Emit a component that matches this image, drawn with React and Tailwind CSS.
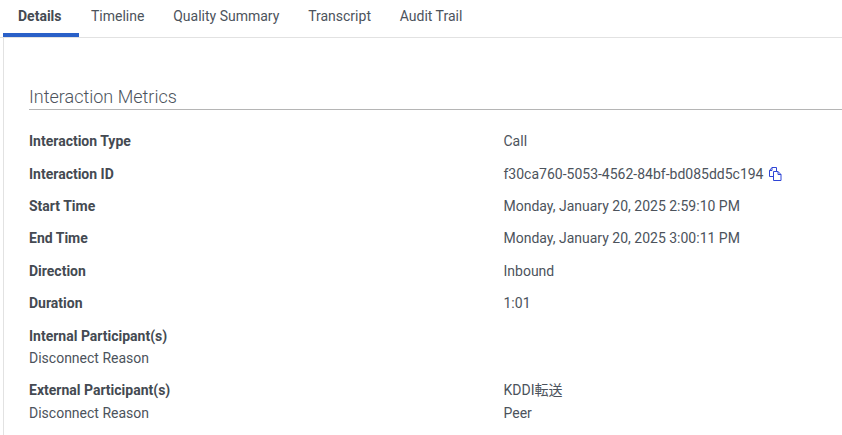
function CopyIcon() {
  return (
    <svg width="14" height="14" viewBox="0 0 14 14" fill="none" stroke="#2f45d6" strokeWidth="1" className="ml-[4px] shrink-0">
      <path d="M5.5 9.5H1.5V3.5L4 0.5H8.5V4.5" />
      <path d="M4 0.5V3.5H1.5" />
      <path d="M5.5 4.5H10L13 7.5V13.5H5.5Z" />
      <path d="M10 4.5V7.5H13" />
    </svg>
  );
}

const tabs = [
  { t: "Details", c: "pl-[15px] pr-[17.5px] font-bold border-b-[4px] border-[#2a60c8] text-[#444a52]" },
  { t: "Timeline", c: "pl-[12px] pr-[14.4px]" },
  { t: "Quality Summary", c: "px-[14.4px]" },
  { t: "Transcript", c: "px-[14.4px]" },
  { t: "Audit Trail", c: "px-[14.4px]" },
];

function Row({ label, value, sub, subValue, className, subGap }) {
  return (
    <div className={"flex " + (className || "")}>
      <div className="w-[474.5px] shrink-0">
        <div className="font-bold h-[20px] text-[#444a52]">{label}</div>
        {sub && <div className={"h-[20px] text-[#4c535c] " + (subGap || "mt-[2px]")}>{sub}</div>}
      </div>
      <div>
        <div className="h-[20px] flex items-center">{value}</div>
        {subValue && <div className={"h-[20px] " + (subGap || "mt-[2px]")}>{subValue}</div>}
      </div>
    </div>
  );
}

export default function App() {
  return (
    <div className="w-[842px] h-[435px] overflow-hidden bg-white text-[14px] leading-[20px] text-[#4c535c] font-['Roboto','Noto_Sans_CJK_JP',sans-serif]">
      <div className="flex pl-[3px] h-[38px] border-b border-[#e2e2e2]">
        {tabs.map(({ t, c }) => (
          <div key={t} className={"pt-[6px] h-[37px] " + c}>
            {t}
          </div>
        ))}
      </div>
      <div className="ml-[3px] border-l border-[#e2e2e2] pl-[25px] pt-[47px] h-[397px]">
        <div className="text-[18px] leading-[24px] font-light text-[#4c535c] border-b border-[#b5b5b5] h-[25px]">
          Interaction Metrics
        </div>
        <div className="flex flex-col mt-[21px]">
          <Row label="Interaction Type" value="Call" />
          <Row className="mt-[13px]" label="Interaction ID" value={<>f30ca760-5053-4562-84bf-bd085dd5c194<CopyIcon /></>} />
          <Row className="mt-[12px]" label="Start Time" value="Monday, January 20, 2025 2:59:10 PM" />
          <Row className="mt-[12px]" label="End Time" value="Monday, January 20, 2025 3:00:11 PM" />
          <Row className="mt-[13px]" label="Direction" value="Inbound" />
          <Row className="mt-[12px]" label="Duration" value="1:01" />
          <Row className="mt-[13px]" label="Internal Participant(s)" sub="Disconnect Reason" />
          <Row className="mt-[12px]" subGap="mt-[3px]" label="External Participant(s)" sub="Disconnect Reason" value="KDDI転送" subValue="Peer" />
        </div>
      </div>
    </div>
  );
}
